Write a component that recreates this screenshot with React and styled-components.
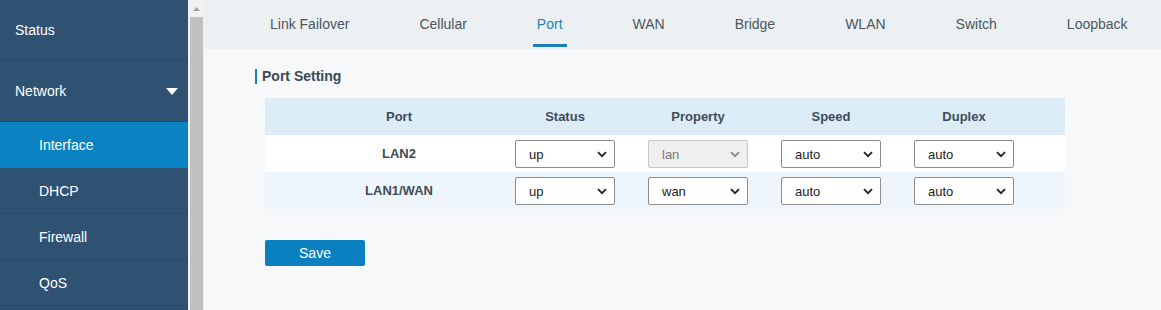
import React from "react";
import styled, { createGlobalStyle } from "styled-components";

const Global = createGlobalStyle`
  html, body { margin: 0; padding: 0; }
  body { font-family: Arial, "Liberation Sans", sans-serif; background: #f6f8f9; }
  * { box-sizing: border-box; }
`;

const Page = styled.div`
  display: flex;
  width: 1161px;
  height: 310px;
  overflow: hidden;
`;

const Sidebar = styled.nav`
  width: 188px;
  flex: none;
  background: #2f5272;
  display: flex;
  flex-direction: column;
`;

const MenuItem = styled.div`
  height: ${(p) => (p.$sub ? 46 : 61)}px;
  display: flex;
  align-items: center;
  justify-content: space-between;
  padding: ${(p) => (p.$sub ? "0 20px 0 39px" : "0 10px 0 15px")};
  font-size: 14px;
  color: #ffffff;
  background: ${(p) => (p.$active ? "#0b83c3" : "transparent")};
  border-bottom: 1px solid ${(p) => (p.$active ? "#0b83c3" : "#284864")};
`;

const Caret = styled.span`
  width: 0;
  height: 0;
  border-left: 6px solid transparent;
  border-right: 6px solid transparent;
  border-top: 7px solid #ffffff;
`;

const ScrollTrack = styled.div`
  width: 16px;
  flex: none;
  background: #f1f1f1;
  display: flex;
  flex-direction: column;
  padding: 0 1px 0 2px;
`;

const ScrollArrow = styled.div`
  height: 17px;
  display: flex;
  align-items: center;
  justify-content: center;
`;

const ScrollThumb = styled.div`
  flex: 1;
  background: #c1c1c1;
`;

const Main = styled.main`
  flex: 1;
  display: flex;
  flex-direction: column;
  background: #f6f8f9;
`;

const TabBar = styled.div`
  height: 49px;
  background: #edf0f2;
  display: flex;
  padding-left: 31px;
`;

const Tab = styled.div`
  position: relative;
  padding: 0 35px;
  display: flex;
  align-items: center;
  padding-bottom: 2px;
  font-size: 14px;
  color: ${(p) => (p.$active ? "#1b82b9" : "#4b5661")};
  white-space: nowrap;
  span { position: relative; }
  ${(p) =>
    p.$active &&
    `span::after {
      content: "";
      position: absolute;
      left: -4px;
      right: -4px;
      top: 28px;
      height: 3px;
      background: #1a7fb2;
    }`}
`;

const Content = styled.div`
  padding: 20px 0 0 51px;
  display: flex;
  flex-direction: column;
`;

const SectionTitle = styled.h3`
  margin: 0;
  font-size: 14px;
  font-weight: bold;
  color: #3b4a57;
  border-left: 2px solid #1a7fb2;
  padding-left: 5px;
  line-height: 15px;
  height: 15px;
`;

const Table = styled.div`
  margin: 14px 0 0 10px;
  width: 800px;
  display: flex;
  flex-direction: column;
`;

const Row = styled.div`
  display: grid;
  grid-template-columns: 250px 133px 133px 133px 133px 18px;
  height: 37px;
  align-items: center;
  background: ${(p) => p.$bg};
`;

const PortCell = styled.div`
  text-align: center;
  padding-left: 18px;
  font-size: 13px;
  font-weight: bold;
  color: #3f4c58;
`;

const HeadCell = styled.div`
  width: 100px;
  text-align: center;
  font-size: 13px;
  font-weight: bold;
  color: #3f4c58;
`;

const SelectWrap = styled.div`
  position: relative;
  width: 100px;
  height: 28px;
  margin-top: 1px;
`;

const Select = styled.select`
  appearance: none;
  -webkit-appearance: none;
  width: 100%;
  height: 100%;
  margin: 0;
  border: 1px solid ${(p) => (p.disabled ? "#c6c6c6" : "#8c8c8c")};
  border-radius: 2px;
  background: ${(p) => (p.disabled ? "#efefef" : "#ffffff")};
  color: ${(p) => (p.disabled ? "#7a7a7a" : "#222222")};
  font-family: Arial, "Liberation Sans", sans-serif;
  font-size: 13px;
  padding: 0 0 0 13px;
  opacity: 1;
`;

const Chevron = styled.svg`
  position: absolute;
  right: 8px;
  top: 11px;
  pointer-events: none;
`;

const Button = styled.button`
  margin: 31px 0 0 10px;
  width: 100px;
  height: 26px;
  border: none;
  border-radius: 2px;
  background: #0b80c1;
  color: #ffffff;
  font-family: Arial, "Liberation Sans", sans-serif;
  font-size: 14px;
  padding: 0;
`;

const tabs = ["Link Failover", "Cellular", "Port", "WAN", "Bridge", "WLAN", "Switch", "Loopback"];

const rows = [
  { port: "LAN2", status: "up", prop: "lan", propDisabled: true, speed: "auto", duplex: "auto", bg: "#ffffff" },
  { port: "LAN1/WAN", status: "up", prop: "wan", propDisabled: false, speed: "auto", duplex: "auto", bg: "#eef6fb" },
];

function Dropdown({ value, disabled }) {
  return (
    <SelectWrap>
      <Select value={value} disabled={disabled} onChange={() => {}}>
        <option value={value}>{value}</option>
      </Select>
      <Chevron width="10" height="7" viewBox="0 0 10 7">
        <path d="M1 1.2 L5 5.2 L9 1.2" fill="none" stroke={disabled ? "#8a8a8a" : "#222"} strokeWidth="1.8" />
      </Chevron>
    </SelectWrap>
  );
}

export default function App() {
  return (
    <>
      <Global />
      <Page>
        <Sidebar>
          <MenuItem>Status</MenuItem>
          <MenuItem>
            Network <Caret />
          </MenuItem>
          <MenuItem $sub $active>Interface</MenuItem>
          <MenuItem $sub>DHCP</MenuItem>
          <MenuItem $sub>Firewall</MenuItem>
          <MenuItem $sub>QoS</MenuItem>
        </Sidebar>
        <ScrollTrack>
          <ScrollArrow>
            <svg width="7" height="4" viewBox="0 0 7 4">
              <path d="M0 4 L3.5 0 L7 4 Z" fill="#a3a3a3" />
            </svg>
          </ScrollArrow>
          <ScrollThumb />
        </ScrollTrack>
        <Main>
          <TabBar>
            {tabs.map((t) => (
              <Tab key={t} $active={t === "Port"}>
                <span>{t}</span>
              </Tab>
            ))}
          </TabBar>
          <Content>
            <SectionTitle>Port Setting</SectionTitle>
            <Table>
              <Row $bg="#dcedf8">
                <PortCell>Port</PortCell>
                <HeadCell>Status</HeadCell>
                <HeadCell>Property</HeadCell>
                <HeadCell>Speed</HeadCell>
                <HeadCell>Duplex</HeadCell>
                <div />
              </Row>
              {rows.map((r) => (
                <Row key={r.port} $bg={r.bg}>
                  <PortCell>{r.port}</PortCell>
                  <Dropdown value={r.status} />
                  <Dropdown value={r.prop} disabled={r.propDisabled} />
                  <Dropdown value={r.speed} />
                  <Dropdown value={r.duplex} />
                  <div />
                </Row>
              ))}
            </Table>
            <Button>Save</Button>
          </Content>
        </Main>
      </Page>
    </>
  );
}
